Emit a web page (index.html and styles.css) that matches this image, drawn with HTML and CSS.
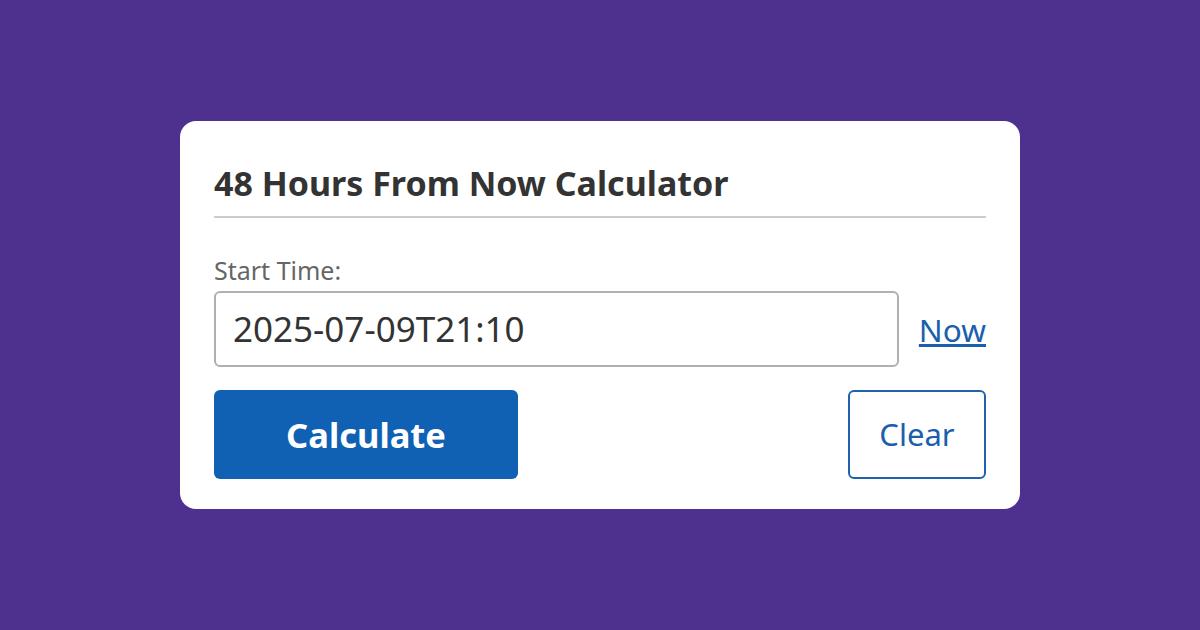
FILE: index.html
```html
<!DOCTYPE html>
<html lang="en">
<head>
    <meta charset="UTF-8">
    <meta name="viewport" content="width=device-width, initial-scale=1.0">
    <title>48 Hours From Now Calculator</title>
    <link rel="stylesheet" href="styles.css">
</head>
<body>
    <div class="calc-card">
        <h2>48 Hours From Now Calculator</h2>

        <label for="startTime">Start Time:</label>
        <div class="input-row">
            <input type="text" id="startTime" value="2025-07-09T21:10">
            <a href="#" class="now-link">Now</a>
        </div>

        <div class="button-row">
            <button class="calc-btn">Calculate</button>
            <button class="clear-btn">Clear</button>
        </div>
    </div>
</body>
</html>
```

FILE: styles.css
```css
/* General Styles */
body {
    font-family: "Noto Sans", "Open Sans", sans-serif;
    margin: 0;
    padding: 0;
    background-color: #4e318f;
    height: 100vh;
    display: flex;
    align-items: center;
    justify-content: center;
}

/* Card */
.calc-card {
    background: white;
    width: 840px;
    box-sizing: border-box;
    padding: 40px 34px 30px;
    border-radius: 16px;
}

.calc-card h2 {
    margin: 0 0 36px;
    padding-bottom: 11px;
    font-size: 34px;
    font-weight: bold;
    color: #333;
    border-bottom: 2px solid #ccc;
    line-height: 1.3;
}

.calc-card label {
    display: block;
    font-size: 25px;
    color: #666;
    margin-bottom: 4px;
    line-height: 1.3;
}

/* Input Row */
.input-row {
    display: flex;
    align-items: center;
    gap: 20px;
}

.input-row input {
    flex-grow: 1;
    min-width: 0;
    height: 76px;
    box-sizing: border-box;
    padding: 0 17px;
    font-family: inherit;
    font-size: 35px;
    color: #333;
    border: 2px solid #b0b0b0;
    border-radius: 6px;
}

.now-link {
    color: #1a5fae;
    font-size: 31.5px;
    line-height: 1.3;
    padding-top: 3px;
}

/* Buttons */
.button-row {
    display: flex;
    justify-content: space-between;
    margin-top: 23px;
}

.calc-btn {
    width: 304px;
    height: 89px;
    background: #1061b3;
    color: white;
    font-family: inherit;
    font-size: 34.5px;
    font-weight: bold;
    border: none;
    border-radius: 6px;
    cursor: pointer;
}

.clear-btn {
    width: 138px;
    height: 89px;
    background: white;
    color: #1a5fae;
    font-family: inherit;
    font-size: 31px;
    border: 2px solid #1e62b0;
    border-radius: 6px;
    cursor: pointer;
}
```
